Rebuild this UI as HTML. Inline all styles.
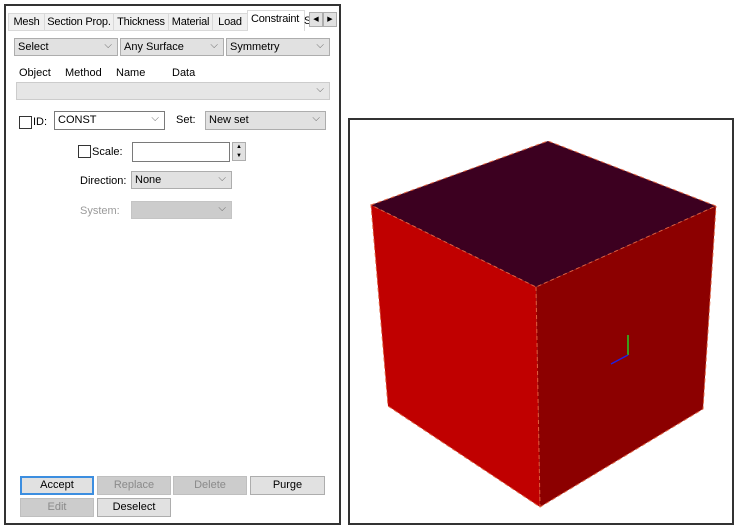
<!DOCTYPE html><html><head><style>
body{margin:0;width:736px;height:529px;background:#fff;position:relative;font-family:"Liberation Sans",sans-serif;font-size:11px;color:#000;overflow:hidden}
.a{position:absolute;box-sizing:border-box}
.dd{background:#e1e1e1;border:1px solid #adadad;padding:2px 3px;line-height:13px}
.dd:after{content:"⌵";position:absolute;right:5px;top:0;color:#666;font-size:10px}
.w{background:#fff;border:1px solid #7a7a7a}
.cb{width:13px;height:13px;border:1px solid #333;background:#fff}
.btn{background:#e1e1e1;border:1px solid #adadad;text-align:center;line-height:17px;height:19px}
.dis{background:#cccccc;color:#8a8a8a;border-color:#bfbfbf}
.tab{position:absolute;top:13px;height:18px;line-height:16px;border:1px solid #d9d9d9;background:#f0f0f0;text-align:center;box-sizing:border-box;white-space:nowrap;overflow:hidden;letter-spacing:-0.2px}
</style></head><body>
<div class="a" style="left:4px;top:4px;width:337px;height:521px;border:2px solid #333"></div>
<div class="tab" style="left:8px;width:37px">Mesh</div>
<div class="tab" style="left:44px;width:70px">Section Prop.</div>
<div class="tab" style="left:113px;width:56px">Thickness</div>
<div class="tab" style="left:168px;width:45px">Material</div>
<div class="tab" style="left:212px;width:36px">Load</div>
<div class="a" style="left:247px;top:10px;width:58px;height:21px;background:#fff;border:1px solid #d9d9d9;border-bottom:none;padding:2px 3px;white-space:nowrap;letter-spacing:-0.2px">Constraint</div>
<div class="a" style="left:304px;top:13px;width:6px;height:17px;overflow:hidden;line-height:17px">S</div>
<div class="a" style="left:309px;top:12px;width:14px;height:15px;border:1px solid #adadad;background:#e1e1e1;font-size:7px;text-align:center;line-height:13px">◀</div>
<div class="a" style="left:323px;top:12px;width:14px;height:15px;border:1px solid #adadad;background:#e1e1e1;font-size:7px;text-align:center;line-height:13px">▶</div>
<div class="a dd" style="left:14px;top:38px;width:104px;height:18px">Select</div>
<div class="a dd" style="left:120px;top:38px;width:104px;height:18px">Any Surface</div>
<div class="a dd" style="left:226px;top:38px;width:104px;height:18px">Symmetry</div>
<div class="a" style="left:19px;top:67px">Object</div>
<div class="a" style="left:65px;top:67px">Method</div>
<div class="a" style="left:116px;top:67px">Name</div>
<div class="a" style="left:172px;top:67px">Data</div>
<div class="a dd" style="left:16px;top:82px;width:314px;height:18px;background:#e6e6e6;border-color:#ccc"></div>
<div class="a cb" style="left:19px;top:116px"></div><div class="a" style="left:33px;top:116px">ID:</div>
<div class="a dd w" style="left:54px;top:111px;width:111px;height:19px;border-color:#7a7a7a">CONST</div>
<div class="a" style="left:176px;top:114px">Set:</div>
<div class="a dd" style="left:205px;top:111px;width:121px;height:19px">New set</div>
<div class="a cb" style="left:78px;top:145px"></div><div class="a" style="left:92px;top:146px">Scale:</div>
<div class="a w" style="left:132px;top:142px;width:98px;height:20px"></div>
<div class="a" style="left:232px;top:142px;width:14px;height:19px;border:1px solid #adadad;background:#e1e1e1;font-size:6px;text-align:center;line-height:9px">▲<br>▼</div>
<div class="a" style="left:80px;top:175px">Direction:</div>
<div class="a dd" style="left:131px;top:171px;width:101px;height:18px">None</div>
<div class="a" style="left:80px;top:205px;color:#9a9a9a">System:</div>
<div class="a dd" style="left:131px;top:201px;width:101px;height:18px;background:#cccccc;border-color:#c4c4c4"></div>
<div class="a btn" style="left:20px;top:476px;width:74px;border:2px solid #3c8ee0;line-height:15px">Accept</div>
<div class="a btn dis" style="left:97px;top:476px;width:74px">Replace</div>
<div class="a btn dis" style="left:173px;top:476px;width:74px">Delete</div>
<div class="a btn" style="left:250px;top:476px;width:75px">Purge</div>
<div class="a btn dis" style="left:20px;top:498px;width:74px">Edit</div>
<div class="a btn" style="left:97px;top:498px;width:74px">Deselect</div>
<div class="a" style="left:348px;top:118px;width:386px;height:407px;border:2px solid #333"></div>
<svg class="a" style="left:0;top:0" width="736" height="529">
<polygon points="548,141 716,206 536,287 371,205" fill="#3c0020"/>
<polygon points="371,205 536,287 540,507 388,406" fill="#c00000"/>
<polygon points="536,287 716,206 703,409 540,507" fill="#8c0000"/>
<g stroke="#e06040" stroke-width="1" stroke-dasharray="4,3" fill="none"><polyline points="371,205 548,141 716,206 536,287 371,205 388,406 540,507 703,409 716,206"/><line x1="536" y1="287" x2="540" y2="507"/></g>
<line x1="628" y1="355" x2="628" y2="335" stroke="#20d020" stroke-width="1.5"/>
<line x1="628" y1="355" x2="611" y2="364" stroke="#2020e0" stroke-width="1.5"/>
</svg>
</body></html>
